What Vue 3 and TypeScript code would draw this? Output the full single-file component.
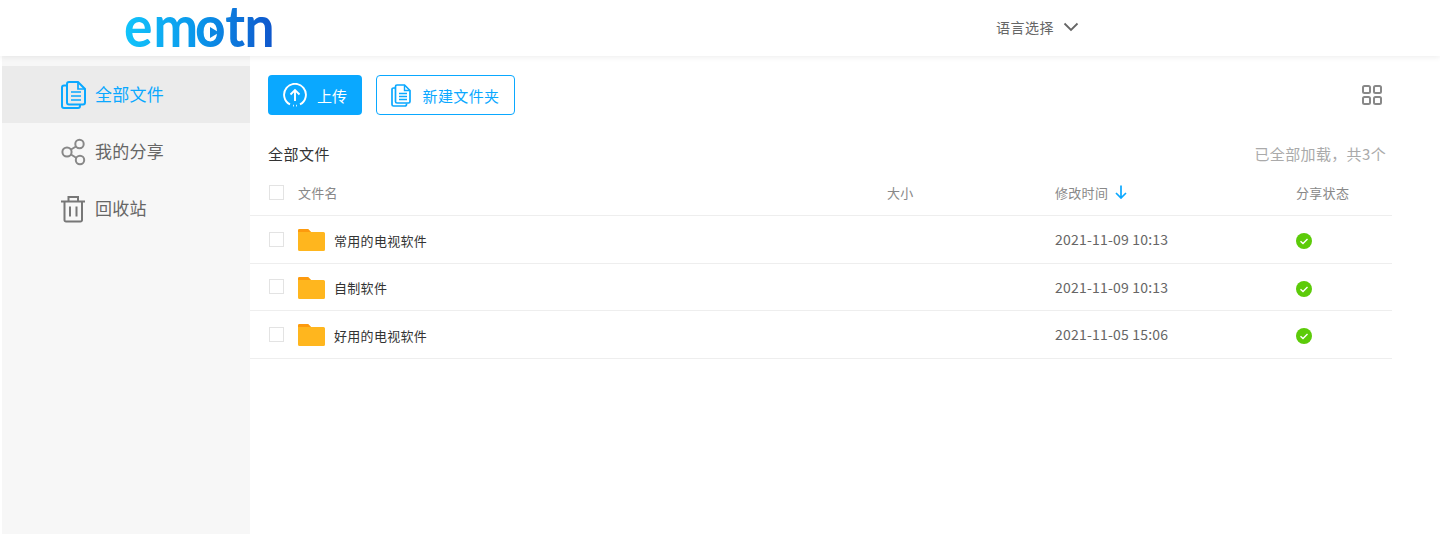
<script setup lang="ts">
interface FileRow { name: string; time: string }
const files: FileRow[] = [
  { name: '常用的电视软件', time: '2021-11-09 10:13' },
  { name: '自制软件', time: '2021-11-09 10:13' },
  { name: '好用的电视软件', time: '2021-11-05 15:06' },
]
</script>

<template>
  <div class="page">
    <header class="topbar">
      <div class="logo">
        <svg width="180" height="56" viewBox="0 0 180 56">
          <defs>
            <linearGradient id="lg" x1="0" y1="0" x2="160" y2="0" gradientUnits="userSpaceOnUse">
              <stop offset="0" stop-color="#12c4fb" />
              <stop offset="0.5" stop-color="#0a95ea" />
              <stop offset="1" stop-color="#0f57cc" />
            </linearGradient>
          </defs>
          <text transform="scale(0.92 1)" y="47" x="-1 31 76 109 130" class="logo-text" fill="url(#lg)">emotn</text>
          <path d="M85 27 V38 L94 32.5 Z" fill="#0b86e2" />
        </svg>
      </div>
      <div class="lang">
        <span>语言选择</span>
        <svg width="16" height="10" viewBox="0 0 16 10"><path d="M1.5 1.5 L8 8 L14.5 1.5" fill="none" stroke="#666" stroke-width="1.8" /></svg>
      </div>
    </header>

    <div class="body">
      <aside class="sidebar">
        <div class="nav-item active">
          <svg class="nav-icon" width="26" height="28" viewBox="0 0 26 28" fill="none" stroke="#0aa8ff" stroke-width="2">
            <path d="M6 4.5 H3 a2 2 0 0 0 -2 2 V25 a2 2 0 0 0 2 2 H17 a2 2 0 0 0 2 -2 V23.5" />
            <path d="M6 3 a2 2 0 0 1 2 -2 H17 L24 8 V21.5 a2 2 0 0 1 -2 2 H8 a2 2 0 0 1 -2 -2 Z" />
            <path d="M17 1.5 V8 H23.5 M10 11 H20 M10 15 H20 M10 19 H20" stroke-width="1.7" />
          </svg>
          <span>全部文件</span>
        </div>
        <div class="nav-item">
          <svg class="nav-icon" width="26" height="28" viewBox="0 0 26 28" fill="none" stroke="#888" stroke-width="2">
            <circle cx="6" cy="14" r="4.6" />
            <circle cx="18.5" cy="6" r="4.2" />
            <circle cx="19" cy="22" r="4.2" />
            <path d="M10 11.5 L15 8.5 M10 16.5 L15.5 20" />
          </svg>
          <span>我的分享</span>
        </div>
        <div class="nav-item">
          <svg class="nav-icon trash" width="26" height="28" viewBox="0 0 26 28" fill="none" stroke="#777" stroke-width="2">
            <path d="M0 6.5 H24 M7.5 6.5 V2 H17 V6.5 M3.5 6.5 V25 a1.5 1.5 0 0 0 1.5 1.5 H19.5 a1.5 1.5 0 0 0 1.5 -1.5 V6.5 M9 11.5 V21.5 M15.5 11.5 V21.5" />
          </svg>
          <span>回收站</span>
        </div>
      </aside>

      <main class="main">
        <div class="toolbar">
          <button class="btn primary" type="button">
            <svg width="24" height="24" viewBox="0 0 24 24" fill="none" stroke="#fff" stroke-width="1.9">
              <path d="M7 21.4 A10.9 10.9 0 1 1 17 21.4" />
              <path d="M12 18 V7 M7.5 11.5 L12 7 L16.5 11.5" />
              <path d="M10 22.6 h0.8 M13.2 22.6 h0.8" />
            </svg>
            <span>上传</span>
          </button>
          <button class="btn outline" type="button">
            <svg width="20" height="23" viewBox="0 0 20 23" fill="none" stroke="#0aa8ff" stroke-width="1.7">
              <path d="M4 4 H2.5 a1.5 1.5 0 0 0 -1.5 1.5 V20.5 A1.5 1.5 0 0 0 2.5 22 H14 a1.5 1.5 0 0 0 1.5 -1.5 V19.5" />
              <path d="M4.5 2.5 a1.5 1.5 0 0 1 1.5 -1.5 H13.5 L19 6.5 V17.5 A1.5 1.5 0 0 1 17.5 19 H6 A1.5 1.5 0 0 1 4.5 17.5 Z" />
              <path d="M13.5 1.5 V6.5 H18.5 M8 9.5 H16 M8 12.5 H16 M8 15.5 H16" stroke-width="1.4" />
            </svg>
            <span class="btn-label">新建文件夹</span>
          </button>
          <svg class="grid-icon" width="20" height="20" viewBox="0 0 20 20" fill="none" stroke="#888" stroke-width="2">
            <rect x="1" y="1" width="7" height="7" rx="1.5" />
            <rect x="12" y="1" width="7" height="7" rx="1.5" />
            <rect x="1" y="12" width="7" height="7" rx="1.5" />
            <rect x="12" y="12" width="7" height="7" rx="1.5" />
          </svg>
        </div>

        <div class="crumbs">
          <span class="crumb-title">全部文件</span>
          <span class="crumb-count">已全部加载，共3个</span>
        </div>

        <div class="row head">
          <div class="name-cell">
            <span class="check"></span>
            <span>文件名</span>
          </div>
          <div>大小</div>
          <div class="time-head">
            <span>修改时间</span>
            <svg width="12" height="14" viewBox="0 0 12 14" fill="none" stroke="#0aa8ff" stroke-width="1.7"><path d="M6 0.5 V13 M1 8 L6 13 L11 8" /></svg>
          </div>
          <div class="share-head">分享状态</div>
        </div>

        <div v-for="file in files" :key="file.name" class="row item">
          <div class="name-cell">
            <span class="check"></span>
            <svg class="folder" width="27" height="22" viewBox="0 0 27 22">
              <path d="M0 1.5 A1.5 1.5 0 0 1 1.5 0 H10 L13 3 H25.5 A1.5 1.5 0 0 1 27 4.5 V20.5 A1.5 1.5 0 0 1 25.5 22 H1.5 A1.5 1.5 0 0 1 0 20.5 Z" fill="#ffb61e" />
              <path d="M0 1.5 A1.5 1.5 0 0 1 1.5 0 H10 L13 3 H0 Z" fill="#fd9a0e" />
            </svg>
            <span class="file-name">{{ file.name }}</span>
          </div>
          <div></div>
          <div class="time">{{ file.time }}</div>
          <div class="status">
            <svg width="16" height="16" viewBox="0 0 16 16">
              <circle cx="8" cy="8" r="8" fill="#5ccb09" />
              <path d="M4.5 8.2 L7 10.5 L11.5 6" fill="none" stroke="#fff" stroke-width="1.4" />
            </svg>
          </div>
        </div>
      </main>
    </div>
  </div>
</template>

<style>
html, body { margin: 0; background: #fff; }
</style>

<style scoped>
.page {
  height: 534px;
  display: flex;
  flex-direction: column;
  overflow: hidden;
  font-family: "Noto Sans CJK SC", "Noto Sans", sans-serif;
}
.topbar {
  height: 56px;
  flex: none;
  display: flex;
  align-items: center;
  position: relative;
  z-index: 1;
  background: #fff;
  box-shadow: 0 1px 6px rgba(0, 0, 0, 0.08);
}
.logo { margin-left: 125px; width: 180px; height: 56px; }
.logo-text { font-family: Lato, sans-serif; font-weight: 700; font-size: 58px; }
.lang {
  margin-left: 691px;
  display: flex;
  align-items: center;
  gap: 9px;
  font-size: 14px;
  letter-spacing: 0.5px;
  line-height: 18px;
  color: #666;
  padding-bottom: 2px;
}
.body { flex: 1; display: flex; min-height: 0; }
.sidebar {
  width: 248px;
  margin-left: 2px;
  padding-top: 10px;
  background: #f7f7f7;
  flex: none;
}
.nav-item {
  height: 57px;
  display: flex;
  align-items: center;
  padding-left: 59px;
  gap: 8px;
  font-size: 17px;
  letter-spacing: 0.25px;
  color: #666;
}
.nav-item span { position: relative; top: -1px; }
.nav-item.active { background: #ebebeb; color: #0aa8ff; }
.nav-icon { flex: none; }
.main { flex: 1; margin-right: 48px; min-width: 0; }
.toolbar {
  height: 40px;
  margin-top: 19px;
  padding: 0 10px 0 18px;
  display: flex;
  align-items: center;
  gap: 14px;
}
.btn {
  height: 40px;
  box-sizing: border-box;
  border-radius: 4px;
  display: flex;
  align-items: center;
  justify-content: center;
  font-family: inherit;
  font-size: 15px;
  padding: 0;
}
.btn.primary {
  width: 94px;
  gap: 10px;
  background: #0aa8ff;
  border: none;
  color: #fff;
}
.btn.outline {
  width: 139px;
  gap: 11px;
  background: #fff;
  border: 1px solid #0aa8ff;
  color: #0aa8ff;
}
.btn-label { letter-spacing: 0.4px; }
.grid-icon { margin-left: auto; }
.crumbs {
  margin-top: 24px;
  padding: 0 6px 0 18px;
  height: 28px;
  display: flex;
  justify-content: space-between;
  align-items: center;
  margin-bottom: 2px;
}
.crumb-title { font-size: 15px; letter-spacing: 0.5px; color: #333; }
.crumb-count { font-size: 15px; letter-spacing: 0.35px; color: #aaa; }
.row {
  display: grid;
  grid-template-columns: 637px 168px 242px 1fr;
  align-items: center;
  box-sizing: border-box;
  border-bottom: 1px solid #eee;
}
.head {
  height: 47px;
  font-size: 13px;
  letter-spacing: 0.3px;
  color: #888;
}
.share-head { margin-left: -1px; }
.item { height: 47.5px; }
.name-cell {
  display: flex;
  align-items: center;
  padding-left: 19px;
}
.check {
  width: 15px;
  height: 15px;
  box-sizing: border-box;
  border: 1px solid #e3e3e3;
  background: #fff;
  margin-right: 14px;
  flex: none;
}
.folder { flex: none; margin-right: 9px; position: relative; top: 1px; }
.file-name { font-size: 13px; letter-spacing: 0.3px; color: #333; position: relative; top: 1px; }
.time-head { display: flex; align-items: center; gap: 7px; }
.time { font-size: 14px; letter-spacing: 0.2px; color: #666; }
.status { display: flex; align-items: center; height: 16px; margin-top: 4px; margin-left: -1px; }
</style>
